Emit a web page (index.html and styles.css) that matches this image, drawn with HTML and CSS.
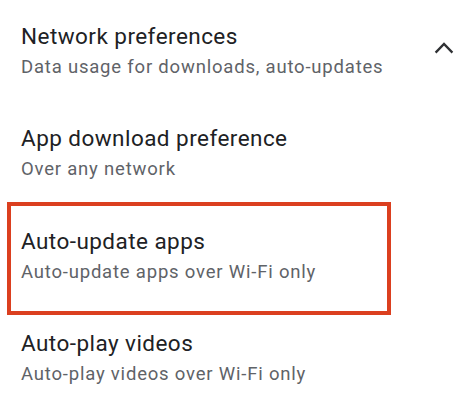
FILE: index.html
```html
<!DOCTYPE html>
<html>
<head>
<meta charset="utf-8">
<link rel="stylesheet" href="styles.css">
</head>
<body>
<div class="list">
  <div class="row">
    <div class="text">
      <div class="title">Network preferences</div>
      <div class="sub">Data usage for downloads, auto-updates</div>
    </div>
    <svg class="chev" width="24" height="24" viewBox="0 0 24 24"><path d="M3.6 16.6 L12 8 L20.4 16.6" fill="none" stroke="#2f3134" stroke-width="2.3"/></svg>
  </div>
  <div class="row">
    <div class="text">
      <div class="title">App download preference</div>
      <div class="sub">Over any network</div>
    </div>
  </div>
  <div class="row highlighted">
    <div class="text">
      <div class="title">Auto-update apps</div>
      <div class="sub">Auto-update apps over Wi-Fi only</div>
    </div>
  </div>
  <div class="row">
    <div class="text">
      <div class="title">Auto-play videos</div>
      <div class="sub">Auto-play videos over Wi-Fi only</div>
    </div>
  </div>
</div>
</body>
</html>
```
FILE: styles.css
```css
html, body {
  margin: 0;
  padding: 0;
  background: #ffffff;
  overflow: hidden;
}
body {
  font-family: Roboto, "Noto Sans", sans-serif;
  width: 474px;
  height: 404px;
}
.list {
  display: flex;
  flex-direction: column;
}
.row {
  position: relative;
  display: flex;
  height: 102.5px;
  box-sizing: border-box;
  padding: 20.5px 18px 0 21px;
}
.text {
  flex: 1;
  display: flex;
  flex-direction: column;
  gap: 3px;
}
.title {
  font-size: 22.5px;
  line-height: 30px;
  letter-spacing: 0.45px;
  color: #202124;
}
.sub {
  font-size: 18.5px;
  line-height: 26px;
  letter-spacing: 0.8px;
  color: #5f6368;
}
.chev {
  margin-top: 15.5px;
  flex: none;
}
.highlighted::after {
  content: "";
  position: absolute;
  left: 7px;
  top: -3px;
  width: 384px;
  height: 113px;
  box-sizing: border-box;
  border: 4px solid #db3f1f;
}
```
